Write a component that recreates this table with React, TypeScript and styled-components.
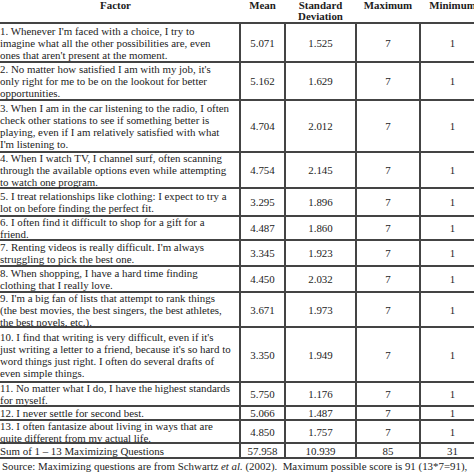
import styled, { createGlobalStyle } from "styled-components";

const GlobalStyle = createGlobalStyle`
  html, body {
    margin: 0;
    padding: 0;
    background: #ffffff;
    overflow: hidden;
  }
`;

type FactorRow = {
  text: string;
  mean: string;
  sd: string;
  max: string;
  min: string;
  h: number;
};

const rows: FactorRow[] = [
  {
    text: "1. Whenever I'm faced with a choice, I try to\nimagine what all the other possibilities are, even\nones that aren't present at the moment.",
    mean: "5.071",
    sd: "1.525",
    max: "7",
    min: "1",
    h: 41,
  },
  {
    text: "2. No matter how satisfied I am with my job, it's\nonly right for me to be on the lookout for better\nopportunities.",
    mean: "5.162",
    sd: "1.629",
    max: "7",
    min: "1",
    h: 38,
  },
  {
    text: "3. When I am in the car listening to the radio, I often\ncheck other stations to see if something better is\nplaying, even if I am relatively satisfied with what\nI'm listening to.",
    mean: "4.704",
    sd: "2.012",
    max: "7",
    min: "1",
    h: 52,
  },
  {
    text: "4. When I watch TV, I channel surf, often scanning\nthrough the available options even while attempting\nto watch one program.",
    mean: "4.754",
    sd: "2.145",
    max: "7",
    min: "1",
    h: 36,
  },
  {
    text: "5. I treat relationships like clothing: I expect to try a\nlot on before finding the perfect fit.",
    mean: "3.295",
    sd: "1.896",
    max: "7",
    min: "1",
    h: 28,
  },
  {
    text: "6. I often find it difficult to shop for a gift for a\nfriend.",
    mean: "4.487",
    sd: "1.860",
    max: "7",
    min: "1",
    h: 24,
  },
  {
    text: "7. Renting videos is really difficult. I'm always\nstruggling to pick the best one.",
    mean: "3.345",
    sd: "1.923",
    max: "7",
    min: "1",
    h: 26,
  },
  {
    text: "8. When shopping, I have a hard time finding\nclothing that I really love.",
    mean: "4.450",
    sd: "2.032",
    max: "7",
    min: "1",
    h: 26,
  },
  {
    text: "9. I'm a big fan of lists that attempt to rank things\n(the best movies, the best singers, the best athletes,\nthe best novels, etc.).",
    mean: "3.671",
    sd: "1.973",
    max: "7",
    min: "1",
    h: 35,
  },
  {
    text: "10. I find that writing is very difficult, even if it's\njust writing a letter to a friend, because it's so hard to\nword things just right. I often do several drafts of\neven simple things.",
    mean: "3.350",
    sd: "1.949",
    max: "7",
    min: "1",
    h: 55,
  },
  {
    text: "11. No matter what I do, I have the highest standards\nfor myself.",
    mean: "5.750",
    sd: "1.176",
    max: "7",
    min: "1",
    h: 24,
  },
  {
    text: "12. I never settle for second best.",
    mean: "5.066",
    sd: "1.487",
    max: "7",
    min: "1",
    h: 14,
  },
  {
    text: "13. I often fantasize about living in ways that are\nquite different from my actual life.",
    mean: "4.850",
    sd: "1.757",
    max: "7",
    min: "1",
    h: 23,
  },
  {
    text: "Sum of 1 \u2013 13 Maximizing Questions",
    mean: "57.958",
    sd: "10.939",
    max: "85",
    min: "31",
    h: 15,
  },
];

const Page = styled.div`
  width: 474px;
  height: 472px;
  overflow: hidden;
  font-family: "Liberation Serif", "Times New Roman", serif;
  color: #1c1c1c;
`;

const Table = styled.table`
  margin-left: -10px;
  width: 494px;
  table-layout: fixed;
  border-collapse: separate;
  border-spacing: 0;
  font-size: 10.9px;
`;

const HeadRow = styled.tr`
  height: 21px;
`;

const HeadCell = styled.th`
  padding: 0;
  border-left: 2px solid transparent;
  font-weight: bold;
  line-height: 11px;
  text-align: center;
  vertical-align: top;
`;

const Cell = styled.td<{ $first?: boolean }>`
  padding: 0;
  border-left: 2px solid #444444;
  border-bottom: 2px solid #444444;
  border-top: ${(p) => (p.$first ? "2px solid #444444" : "none")};
  vertical-align: middle;
`;

const FactorCell = styled(Cell)`
  padding: 0 3px 0 8px;
  text-align: left;
`;

/* fixed-height box so the row keeps the reference height even when
   the lines sit tight against the rules */
const FactorText = styled.div<{ $h: number }>`
  height: ${(p) => p.$h}px;
  display: flex;
  flex-direction: column;
  justify-content: center;
  line-height: 12px;
  white-space: pre-line;
`;

const NumCell = styled(Cell)`
  line-height: 12px;
  text-align: center;
  white-space: nowrap;
`;

const SourceCell = styled.td`
  padding: 1px 0 0 10px;
  border-left: 2px solid transparent;
  line-height: 12px;
  text-align: left;
  white-space: pre;
`;

const Em = styled.i`
  font-style: italic;
`;

export default function App() {
  return (
    <Page>
      <GlobalStyle />
      <Table>
        <colgroup>
          <col style={{ width: 249 }} />
          <col style={{ width: 45 }} />
          <col style={{ width: 71 }} />
          <col style={{ width: 64 }} />
          <col style={{ width: 65 }} />
        </colgroup>
        <thead>
          <HeadRow>
            <HeadCell>Factor</HeadCell>
            <HeadCell>Mean</HeadCell>
            <HeadCell>
              Standard
              <br />
              Deviation
            </HeadCell>
            <HeadCell>Maximum</HeadCell>
            <HeadCell>Minimum</HeadCell>
          </HeadRow>
        </thead>
        <tbody>
          {rows.map((r, i) => {
            const first = i === 0;
            return (
              <tr key={i}>
                <FactorCell $first={first}>
                  <FactorText $h={r.h - (first ? 4 : 2)}>{r.text}</FactorText>
                </FactorCell>
                <NumCell $first={first}>{r.mean}</NumCell>
                <NumCell $first={first}>{r.sd}</NumCell>
                <NumCell $first={first}>{r.max}</NumCell>
                <NumCell $first={first}>{r.min}</NumCell>
              </tr>
            );
          })}
          <tr>
            <SourceCell colSpan={5}>
              Source: Maximizing questions are from Schwartz <Em>et al.</Em>{" "}
              (2002).  Maximum possible score is 91 (13*7=91),
            </SourceCell>
          </tr>
        </tbody>
      </Table>
    </Page>
  );
}
